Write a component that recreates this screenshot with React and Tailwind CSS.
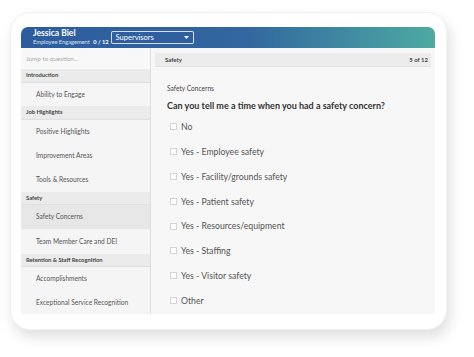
import React from "react";

const sections = [
  { title: "Introduction", h: "h-[14px]", items: [{ label: "Ability to Engage", h: "h-[23px]" }] },
  {
    title: "Job Highlights",
    h: "h-[14px]",
    items: [
      { label: "Positive Highlights", h: "h-[24px]" },
      { label: "Improvement Areas", h: "h-[24px]" },
      { label: "Tools & Resources", h: "h-[24px]" },
    ],
  },
  {
    title: "Safety",
    h: "h-[13px]",
    items: [
      { label: "Safety Concerns", h: "h-[24px]", active: true },
      { label: "Team Member Care and DEI", h: "h-[25px]" },
    ],
  },
  {
    title: "Retention & Staff Recognition",
    h: "h-[13px]",
    items: [
      { label: "Accomplishments", h: "h-[24px]" },
      { label: "Exceptional Service Recognition", h: "h-[23px]" },
    ],
  },
];

const options = [
  "No",
  "Yes - Employee safety",
  "Yes - Facility/grounds safety",
  "Yes - Patient safety",
  "Yes - Resources/equipment",
  "Yes - Staffing",
  "Yes - Visitor safety",
  "Other",
];

function App() {
  return (
    <div className="w-[474px] h-[357px] bg-white overflow-hidden font-['Lato','Liberation_Sans',sans-serif]">
      {/* Outer card */}
      <div className="ml-[10px] mt-[12px] w-[437px] h-[318px] bg-white rounded-[20px] shadow-[3px_7px_14px_rgba(0,0,0,0.13)] border border-[#f1f1f1] pl-[10px] pt-[14px] pr-[11px] pb-[15px]">
        <div className="w-[414px] h-[287px] flex flex-col">
          {/* Header */}
          <div className="h-[21px] rounded-t-[7px] bg-gradient-to-r from-[#2c5c9e] via-[#33679f] via-55% to-[#4eaaa1] flex items-center pl-[12px]">
            <div className="flex flex-col leading-none text-white whitespace-nowrap shrink-0">
              <span className="text-[8.5px] font-bold leading-[9px]">Jessica Biel</span>
              <span className="text-[5.7px] leading-[8px] text-white/80">
                Employee Engagement <span className="font-bold text-white ml-[2px]">0 / 12</span>
              </span>
            </div>
            <div className="ml-[2px] w-[83px] h-[13px] border border-white/80 rounded-[2px] bg-[#2f5f9e] flex items-center justify-between px-[4px] shrink-0">
              <span className="text-[7.5px] text-white leading-none">Supervisors</span>
              <svg width="5" height="3" viewBox="0 0 5 3">
                <path d="M0 0h5L2.5 3z" fill="#ffffff" />
              </svg>
            </div>
          </div>

          {/* Body */}
          <div className="flex flex-1 min-h-0">
            {/* Sidebar */}
            <div className="w-[130px] bg-[#f5f5f5] border-r border-[#dedede] flex flex-col">
              <div className="h-[21px] flex items-center pl-[5px] text-[6.3px] text-[#a8a8a8] bg-[#f8f8f8]">
                Jump to question...
              </div>
              {sections.map((s) => (
                <div key={s.title}>
                  <div className={`${s.h} bg-[#ebebeb] border-b border-[#e0e0e0] flex items-center pl-[5px] text-[5.8px] font-bold text-[#444]`}>
                    {s.title}
                  </div>
                  {s.items.map((it) => (
                    <div
                      key={it.label}
                      className={`${it.h} flex items-center pl-[15px] text-[6.6px] text-[#555] ${it.active ? "bg-[#e7e7e7]" : ""}`}
                    >
                      {it.label}
                    </div>
                  ))}
                </div>
              ))}
            </div>

            {/* Main */}
            <div className="flex-1 bg-[#f7f7f7] pt-[5px] pl-[4px] pr-[4px]">
              <div className="h-[14px] bg-[#ececec] border-b border-[#e2e2e2] flex items-center justify-between pl-[10px] pr-[3px] text-[6px] font-bold text-[#444]">
                <span>Safety</span>
                <span>5 of 12</span>
              </div>
              <div className="pl-[12px] pt-[16px]">
                <div className="text-[6.6px] text-[#444] leading-[10px]">Safety Concerns</div>
                <div className="mt-[7px] text-[9px] font-bold text-[#333] leading-[12px]">
                  Can you tell me a time when you had a safety concern?
                </div>
                <div className="mt-[2px] flex flex-col">
                  {options.map((o) => (
                    <div key={o} className="h-[24.9px] flex items-center">
                      <span className="ml-[3px] w-[7px] h-[7px] border border-[#d4d4d4] bg-white" />
                      <span className="ml-[4px] text-[8.7px] text-[#555]">{o}</span>
                    </div>
                  ))}
                </div>
              </div>
            </div>
          </div>
        </div>
      </div>
    </div>
  );
}

export default App;
